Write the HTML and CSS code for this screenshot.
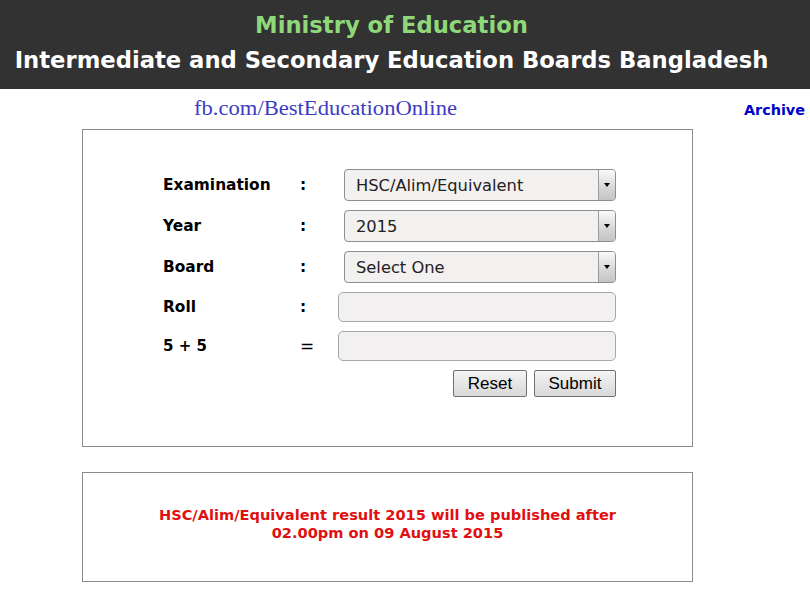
FILE: index.html
```html
<!DOCTYPE html>
<html>
<head>
<meta charset="utf-8">
<title>Education Board Results</title>
<link rel="stylesheet" href="styles.css">
</head>
<body>
<header class="top">
  <div class="ministry">Ministry of Education</div>
  <div class="boards">Intermediate and Secondary Education Boards Bangladesh</div>
</header>
<div class="subbar">
  <a class="fb" href="#">fb.com/BestEducationOnline</a>
  <a class="archive" href="#">Archive</a>
</div>
<div class="formbox">
  <div class="form">
    <div class="row sel">
      <div class="label">Examination</div>
      <div class="sep">:</div>
      <div class="select"><span class="val">HSC/Alim/Equivalent</span><span class="arrow"></span></div>
    </div>
    <div class="row sel">
      <div class="label">Year</div>
      <div class="sep">:</div>
      <div class="select"><span class="val">2015</span><span class="arrow"></span></div>
    </div>
    <div class="row sel">
      <div class="label">Board</div>
      <div class="sep">:</div>
      <div class="select"><span class="val">Select One</span><span class="arrow"></span></div>
    </div>
    <div class="row inp first">
      <div class="label">Roll</div>
      <div class="sep">:</div>
      <div class="input"></div>
    </div>
    <div class="row inp">
      <div class="label alt">5 + 5</div>
      <div class="sep eq">=</div>
      <div class="input"></div>
    </div>
    <div class="buttons">
      <button class="btn reset">Reset</button>
      <button class="btn submit">Submit</button>
    </div>
  </div>
</div>
<div class="msgbox">
  <p class="msg">HSC/Alim/Equivalent result 2015 will be published after<br>02.00pm on 09 August 2015</p>
</div>
</body>
</html>
```
FILE: styles.css
```css
html, body {
  margin: 0;
  padding: 0;
  background: #ffffff;
}
body {
  font-family: "DejaVu Sans", Verdana, sans-serif;
  color: #000;
}
.top {
  background: #323232;
  height: 89px;
  box-sizing: border-box;
  padding: 10px 27px 0 0;
  text-align: center;
  font-weight: bold;
}
.ministry {
  color: #8fd87a;
  font-size: 22.7px;
  line-height: 30px;
}
.boards {
  color: #ffffff;
  font-size: 22.7px;
  line-height: 30px;
  margin-top: 5px;
}
.subbar {
  display: flex;
  align-items: baseline;
  justify-content: space-between;
  height: 40px;
  padding: 8px 5px 0 194px;
  box-sizing: border-box;
}
.fb {
  display: inline-block;
  font-family: "Liberation Serif", serif;
  font-size: 20px;
  color: #3c3cc4;
  text-decoration: none;
  transform: scaleX(1.13);
  transform-origin: left center;
}
.archive {
  font-size: 14.4px;
  font-weight: bold;
  color: #0000c8;
  text-decoration: none;
}
.formbox {
  margin-left: 82px;
  width: 611px;
  height: 318px;
  box-sizing: border-box;
  border: 1px solid #8c8c8c;
  padding: 39px 0 0 80px;
}
.row {
  display: grid;
  grid-template-columns: 137px 38px 278px;
  align-items: center;
  font-size: 15.4px;
  font-weight: bold;
}
.row.sel { height: 32px; margin-bottom: 9px; }
.row.inp { height: 30px; margin-bottom: 9px; }
.label.alt { font-size: 15px; }
.sep.eq { font-weight: normal; font-size: 17px; }
.select {
  margin-left: 6px;
  height: 32px;
  box-sizing: border-box;
  border: 1px solid #8e8e8e;
  border-radius: 4px;
  background: #f3f0f0;
  display: flex;
  align-items: center;
  font-weight: normal;
  font-size: 16.3px;
  color: #222;
  overflow: hidden;
}
.val {
  flex: 1;
  padding-left: 11px;
}
.arrow {
  width: 17px;
  height: 100%;
  box-sizing: border-box;
  border-left: 1px solid #9a9a9a;
  background: linear-gradient(#fafafa, #d6d6d6 60%, #c4c4c4);
  position: relative;
}
.arrow::after {
  content: "";
  position: absolute;
  left: 5px;
  top: 13px;
  border-left: 3px solid transparent;
  border-right: 3px solid transparent;
  border-top: 4px solid #000;
}
.input {
  height: 30px;
  box-sizing: border-box;
  border: 1px solid #a8a8a8;
  border-radius: 5px;
  background: #f2f0f0;
}
.buttons {
  display: flex;
  justify-content: flex-end;
  gap: 7px;
  width: 453px;
  margin-top: 4px;
}
.btn {
  font-family: "Liberation Sans", Arial, sans-serif;
  font-size: 17px;
  height: 27px;
  padding: 0;
  border: 1px solid #707070;
  border-radius: 2px;
  background: linear-gradient(#f4f4f4, #e6e6e6 50%, #d8d8d8);
  color: #000;
}
.btn.reset { width: 74px; }
.btn.submit { width: 82px; }
.msgbox {
  margin: 25px 0 0 82px;
  width: 611px;
  height: 110px;
  box-sizing: border-box;
  border: 1px solid #8c8c8c;
  padding-top: 33px;
}
.msg {
  margin: 0;
  text-align: center;
  color: #e01010;
  font-weight: bold;
  font-size: 14.6px;
  line-height: 18px;
}
```
